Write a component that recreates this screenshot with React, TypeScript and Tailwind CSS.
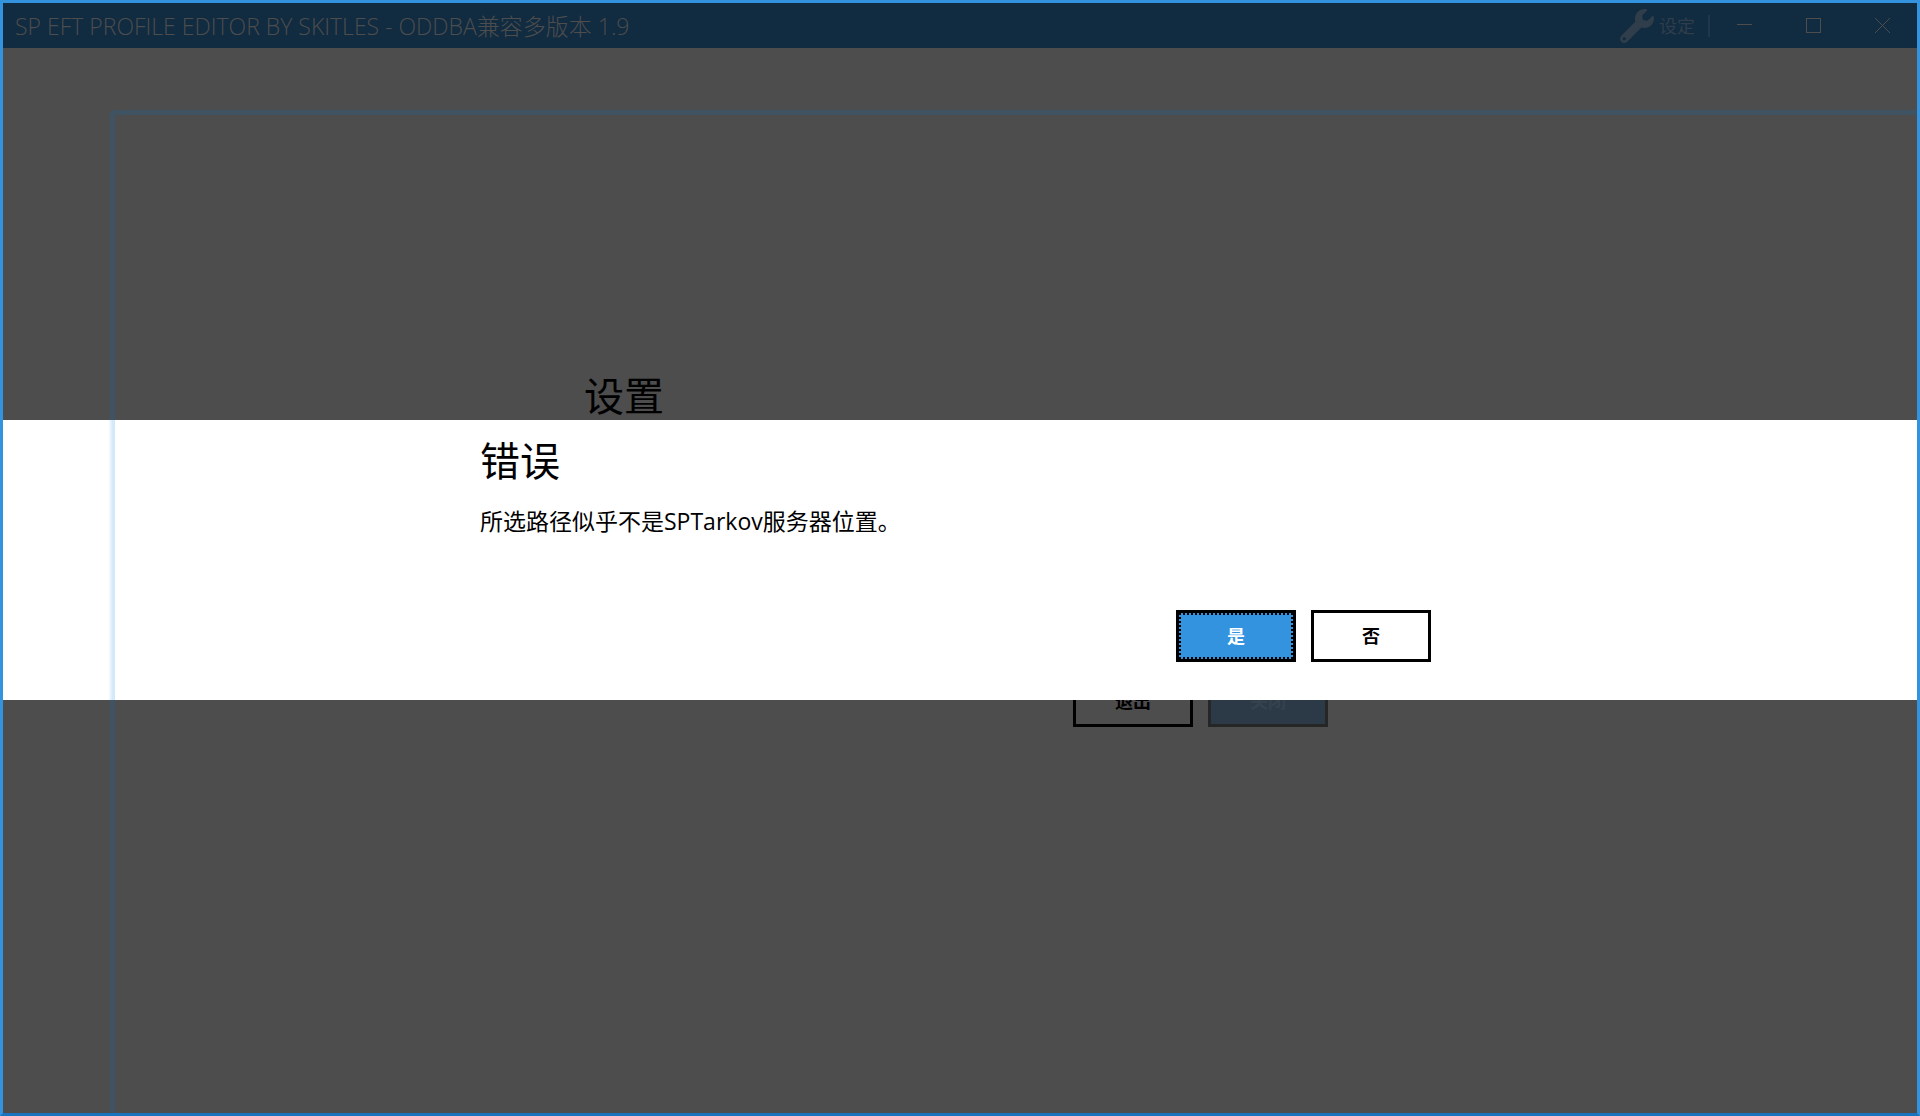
import { FaWrench } from 'react-icons/fa';

const TitleBar = () => {
  return (
    <header className="flex h-[45px] items-center justify-between bg-[#112b41] text-[#4d4d4d]">
      <h1 className="pl-3 text-[23px] font-light leading-[44px]">
        SP EFT PROFILE EDITOR BY SKITLES - ODDBA兼容多版本 1.9
      </h1>
      <div className="flex items-center">
        <button className="flex items-center gap-[5px] pr-[13px] text-[18px] leading-6 text-[#2f3e4a]">
          <FaWrench size={34} />
          设定
        </button>
        <span className="h-[22px] w-[2px] bg-[#20364a]"></span>
        <button aria-label="最小化" className="flex h-[45px] w-[69px] items-center justify-center">
          <svg width="15" height="15" viewBox="0 0 15 15" shapeRendering="crispEdges">
            <path d="M0 6.5H15" stroke="currentColor" />
          </svg>
        </button>
        <button aria-label="最大化" className="flex h-[45px] w-[69px] items-center justify-center">
          <svg width="15" height="15" viewBox="0 0 15 15" shapeRendering="crispEdges">
            <rect x="0.5" y="0.5" width="14" height="14" fill="none" stroke="currentColor" />
          </svg>
        </button>
        <button aria-label="关闭窗口" className="flex h-[45px] w-[69px] items-center justify-center">
          <svg width="15" height="15" viewBox="0 0 15 15">
            <path d="M0 0L15 15M15 0L0 15" stroke="currentColor" />
          </svg>
        </button>
      </div>
    </header>
  );
};

// settings dialog that stays dimmed behind the error message
const SettingsPanel = () => {
  return (
    <main className="flex flex-1 flex-col pl-[107px] pt-[62px]">
      <div className="flex-1 rounded-tl-[5px] border-l-[5px] border-t-[5px] border-[#405363] pl-[469px] pt-[254px]">
        <section className="flex h-[358px] w-[744px] flex-col justify-between text-black">
          <h2 className="text-[40px] leading-[54px]">设置</h2>
          <div className="flex justify-end gap-[15px] text-[18px] font-bold">
            <button className="h-[52px] w-[120px] border-[3px] border-black">退出</button>
            <button disabled className="h-[52px] w-[120px] border-[3px] border-[#262626] bg-[#2c3a47] text-[#35424d]">
              关闭
            </button>
          </div>
        </section>
      </div>
    </main>
  );
};

const ErrorDialog = () => {
  return (
    <div role="dialog" aria-labelledby="error-title" className="absolute inset-x-0 top-[417px] flex h-[280px] bg-white text-black">
      <div className="w-[112px] shrink-0 bg-linear-to-r from-white from-94% to-[#d3e8fa] to-98%"></div>
      <div className="flex flex-1 flex-col pl-[365px] pr-[486px] pt-[14px]">
        <h2 id="error-title" className="text-[40px] leading-[54px]">错误</h2>
        <p className="pt-[16px] text-[23px] leading-[34px]">所选路径似乎不是SPTarkov服务器位置。</p>
        <div className="mt-auto flex justify-end gap-[15px] pb-[38px] text-[18px] font-bold">
          <button className="h-[52px] w-[120px] border-[3px] border-black bg-[#3393df] text-white outline-2 -outline-offset-5 outline-dotted outline-black">
            是
          </button>
          <button className="h-[52px] w-[120px] border-[3px] border-black bg-white">否</button>
        </div>
      </div>
    </div>
  );
};

const App = () => {
  return (
    <div className="relative flex min-h-screen flex-col border-[3px] border-[#3393df] border-b-[#1a73bd] bg-[#4d4d4d] font-['Open_Sans','Noto_Sans_CJK_SC',sans-serif]">
      <TitleBar />
      <SettingsPanel />
      <ErrorDialog />
    </div>
  );
};

export default App;
